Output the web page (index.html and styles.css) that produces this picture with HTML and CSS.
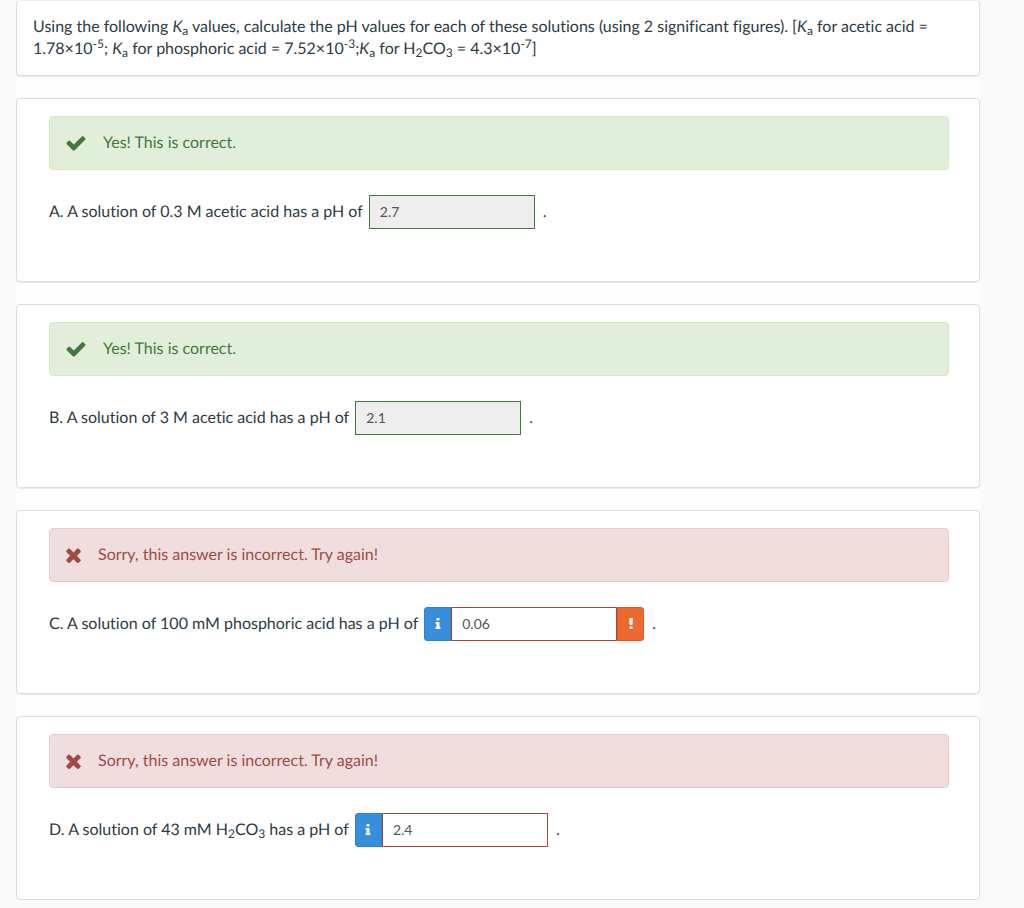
FILE: index.html
```
<!DOCTYPE html>
<html lang="en">
<head>
    <meta charset="utf-8">
    <title>pH Practice Questions</title>
    <link rel="stylesheet" href="styles.css">
</head>
<body>
    <!-- shared icons -->
    <svg class="icon-defs" aria-hidden="true">
        <symbol id="icon-check" viewBox="121 0 1550 1792">
            <path d="M1671 566q0 40-28 68l-724 724-136 136q-28 28-68 28t-68-28l-136-136-362-362q-28-28-28-68t28-68l136-136q28-28 68-28t68 28l294 295 656-657q28-28 68-28t68 28l136 136q28 28 28 68z"/>
        </symbol>
        <symbol id="icon-times" viewBox="302 0 1188 1792">
            <path d="M1490 1322q0 40-28 68l-136 136q-28 28-68 28t-68-28l-294-294-294 294q-28 28-68 28t-68-28l-136-136q-28-28-28-68t28-68l294-294-294-294q-28-28-28-68t28-68l136-136q28-28 68-28t68 28l294 294 294-294q28-28 68-28t68 28l136 136q28 28 28 68t-28 68l-294 294 294 294q28 28 28 68z"/>
        </symbol>
        <symbol id="icon-info" viewBox="0 0 1792 1792">
            <path d="M1216 1344v128q0 26-19 45t-45 19h-512q-26 0-45-19t-19-45v-128q0-26 19-45t45-19h64v-384h-64q-26 0-45-19t-19-45v-128q0-26 19-45t45-19h384q26 0 45 19t19 45v576h64q26 0 45 19t19 45zm-128-1152v192q0 26-19 45t-45 19h-256q-26 0-45-19t-19-45v-192q0-26 19-45t45-19h256q26 0 45 19t19 45z"/>
        </symbol>
        <symbol id="icon-exclamation" viewBox="0 0 1792 1792">
            <path d="M1088 1248v224q0 26-19 45t-45 19h-256q-26 0-45-19t-19-45v-224q0-26 19-45t45-19h256q26 0 45 19t19 45zm30-1056l-28 768q-1 26-20.5 45t-45.5 19h-256q-26 0-45.5-19t-20.5-45l-28-768q-1-26 17.5-45t44.5-19h320q26 0 44.5 19t17.5 45z"/>
        </symbol>
    </svg>

    <main class="content">
        <section class="panel intro">
            <p>Using the following <i>K</i><sub>a</sub> values, calculate the pH values for each of these solutions (using 2 significant figures). [<i>K</i><sub>a</sub> for acetic acid = 1.78×10<sup>-5</sup>; <i>K</i><sub>a</sub> for phosphoric acid = 7.52×10<sup>-3</sup>;<i>K</i><sub>a</sub> for H<sub>2</sub>CO<sub>3</sub> = 4.3×10<sup>-7</sup>]</p>
        </section>

        <section class="panel question">
            <div class="alert alert-success">
                <svg class="icon-check"><use href="#icon-check"/></svg>
                <span>Yes! This is correct.</span>
            </div>
            <div class="answer-row">
                <label for="answerA">A. A solution of 0.3 M acetic acid has a pH of</label>
                <div class="input-group">
                    <input type="text" class="answer correct" id="answerA" value="2.7" readonly>
                </div>
                <span>.</span>
            </div>
        </section>

        <section class="panel question">
            <div class="alert alert-success">
                <svg class="icon-check"><use href="#icon-check"/></svg>
                <span>Yes! This is correct.</span>
            </div>
            <div class="answer-row">
                <label for="answerB">B. A solution of 3 M acetic acid has a pH of</label>
                <div class="input-group">
                    <input type="text" class="answer correct" id="answerB" value="2.1" readonly>
                </div>
                <span>.</span>
            </div>
        </section>

        <section class="panel question">
            <div class="alert alert-danger">
                <svg class="icon-times"><use href="#icon-times"/></svg>
                <span>Sorry, this answer is incorrect. Try again!</span>
            </div>
            <div class="answer-row">
                <label for="answerC">C. A solution of 100 mM phosphoric acid has a pH of</label>
                <div class="input-group">
                    <button type="button" class="addon info" aria-label="Hint"><svg><use href="#icon-info"/></svg></button>
                    <input type="text" class="answer incorrect" id="answerC" value="0.06">
                    <button type="button" class="addon warning" aria-label="Feedback"><svg><use href="#icon-exclamation"/></svg></button>
                </div>
                <span>.</span>
            </div>
        </section>

        <section class="panel question">
            <div class="alert alert-danger">
                <svg class="icon-times"><use href="#icon-times"/></svg>
                <span>Sorry, this answer is incorrect. Try again!</span>
            </div>
            <div class="answer-row">
                <label for="answerD">D. A solution of 43 mM H<sub>2</sub>CO<sub>3</sub> has a pH of</label>
                <div class="input-group">
                    <button type="button" class="addon info" aria-label="Hint"><svg><use href="#icon-info"/></svg></button>
                    <input type="text" class="answer incorrect" id="answerD" value="2.4">
                </div>
                <span>.</span>
            </div>
        </section>
    </main>
</body>
</html>
```
FILE: styles.css
```
* {
    box-sizing: border-box;
}

body {
    margin: 0;
    background-color: #fafafa;
    color: #2d3b45;
    font-family: Lato, sans-serif;
    font-size: 16px;
    line-height: 22px;
    font-variant-ligatures: none;
    text-rendering: geometricPrecision;
}

.icon-defs {
    display: none;
}

.content {
    margin: 0 44px 0 16px;
    background-color: #fefefe;
}

.panel {
    margin-bottom: 22px;
    background-color: #fff;
    border: 1px solid #ddd;
    border-radius: 4px;
    box-shadow: 0 1px 1px rgba(0, 0, 0, 0.08);
}

.panel:last-child {
    margin-bottom: 0;
}

.intro {
    padding: 15px 16px;
    border-top-color: #eee;
}

.intro p {
    margin: 0;
}

sub,
sup {
    font-size: 12px;
    line-height: 0;
    position: relative;
    vertical-align: baseline;
}

sub {
    bottom: -3px;
}

sup {
    top: -6px;
}

.question {
    padding: 17px 30px 52px 32px;
}

.alert {
    display: flex;
    align-items: center;
    gap: 17px;
    padding: 15px 16px;
    border: 1px solid;
    border-radius: 4px;
}

.alert svg {
    height: 22px;
    fill: currentColor;
}

.alert .icon-check {
    width: 20px;
}

.alert .icon-times {
    width: 15px;
}

.alert-success {
    background-color: #e1efda;
    border-color: #d7e8c8;
    color: #45773f;
}

.alert-danger {
    background-color: #f0dede;
    border-color: #e8cace;
    color: #a04a46;
}

.answer-row {
    display: flex;
    align-items: center;
    margin-top: 25px;
}

.input-group {
    display: flex;
    margin: 0 8px 0 6px;
}

.answer {
    width: 166px;
    height: 34px;
    padding: 5px 10px 7px;
    border: 1px solid;
    border-radius: 0;
    background-color: #fff;
    color: #555;
    font-family: inherit;
    font-size: 14px;
    outline: none;
}

.answer.correct {
    background-color: #eee;
    border-color: #45773f;
}

.answer.incorrect {
    border-color: #a04a46;
}

.addon {
    display: flex;
    align-items: center;
    justify-content: center;
    width: 27px;
    height: 34px;
    padding: 0;
    border: 1px solid;
    color: #fff;
    cursor: pointer;
}

.addon svg {
    width: 14px;
    height: 14px;
    fill: currentColor;
}

.addon.info {
    background-color: #378edc;
    border-color: #2f80c8;
    border-radius: 3px 0 0 3px;
}

.addon.warning {
    background-color: #ec6930;
    border-color: #e25c26;
    border-radius: 0 3px 3px 0;
}
```
